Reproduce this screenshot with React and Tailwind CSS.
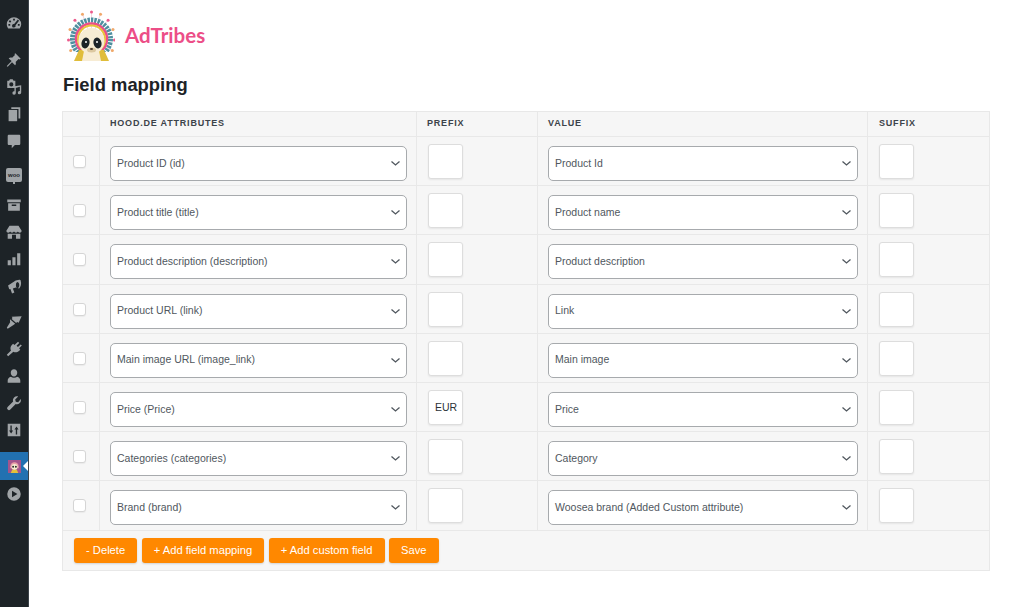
import React from 'react';

const rows = [
  { attribute: 'Product ID (id)', prefix: '', value: 'Product Id' },
  { attribute: 'Product title (title)', prefix: '', value: 'Product name' },
  { attribute: 'Product description (description)', prefix: '', value: 'Product description' },
  { attribute: 'Product URL (link)', prefix: '', value: 'Link' },
  { attribute: 'Main image URL (image_link)', prefix: '', value: 'Main image' },
  { attribute: 'Price (Price)', prefix: 'EUR', value: 'Price' },
  { attribute: 'Categories (categories)', prefix: '', value: 'Category' },
  { attribute: 'Brand (brand)', prefix: '', value: 'Woosea brand (Added Custom attribute)' },
];

const actions = ['- Delete', '+ Add field mapping', '+ Add custom field', 'Save'];

// Admin menu icons, 20x20 box
const icons = {
  dashboard: <path fillRule="evenodd" d="M10 3.500a8 8 0 0 0-8 8c0 1.800.6 3.400 1.600 4.700h12.800A8 8 0 0 0 18 11.500a8 8 0 0 0-8-8zM9 5.200h2v2H9zM5.500 6.800l1.500 1.400-1.400 1.400-1.400-1.400zM14.300 6l1.300 1.400-3.900 5a2 2 0 1 1-1.500-1.300zM3.800 11h2v2h-2zM14.300 11h2v2h-2z" />,
  pin: <path d="M11.500 2.500l6 6-1.500 1-1-.6-3.200 3.200c.6 1.400.3 2.800-.6 3.800L7.800 12.500 3 17.500l-1-.5.500-1 4.900-4.800-3.300-3c1-.9 2.400-1.200 3.800-.6l3.200-3.200-.6-1z" />,
  media: <><path fillRule="evenodd" d="M2.500 3h2l1-1.500h3L9.500 3h2v8h-9zM7 4.800a2.300 2.300 0 1 0 0 4.600 2.300 2.300 0 0 0 0-4.600z" /><path d="M18 8v8.200a1.900 1.900 0 1 1-1.500-1.800v-4.600l-4.500 1.200v5.600a1.900 1.900 0 1 1-1.500-1.800V9.200z" /></>,
  pages: <><path d="M7 2.500h10v12.500h-2V4.500H7z" /><path d="M4 5.500h9.500V18H4z" /></>,
  comment: <path d="M4.500 3h11c1 0 1.500.6 1.500 1.500V13c0 1-.6 1.500-1.500 1.500H11L7.500 18v-3.500h-3C3.500 14.500 3 14 3 13V4.500C3 3.600 3.600 3 4.500 3z" />,
  box: <path fillRule="evenodd" d="M2.500 4h15v3h-15zM3.500 8h13v8.500h-13zM7.500 9.500v1.500h5V9.500z" />,
  store: <path fillRule="evenodd" d="M5 3h10l3.500 5.500c0 1.300-1 2.200-2.200 2.200-.9 0-1.700-.5-2-1.200-.4.700-1.200 1.200-2.100 1.200S10.500 10.200 10 9.500c-.5.700-1.300 1.200-2.200 1.200s-1.700-.5-2.100-1.200c-.3.700-1.100 1.200-2 1.200-1.200 0-2.200-.9-2.200-2.200zM3 12h14v5.500H3zM7.800 13v4.500h4.400V13z" />,
  bars: <path d="M3 11.500h3.500V17H3zM8.200 8h3.500v9H8.200zM13.500 3.500H17V17h-3.500z" />,
  megaphone: <path fillRule="evenodd" d="M17.500 4.500c1 2.800 0 6.700-1.800 8.200L12 11.800l-3.300.9 1.700 4.600-2.600 1-1.800-4.900-1.300.3-1.300-4.200 8.500-5.500 3.900-1c.7-.3 1.500.5 2 1.500zM14.800 6a1.900 3.300 0 1 0 .1 5.900 1.900 3.300 0 0 0-.1-5.900z" />,
  brush: <path d="M18.500 3.500l-3.300 7.200-1.800-.8-1 1.100-5-4.300 1-1.100-1-1.300zM5.500 7l5.800 5-2.300 1.500L3 17.500l-1-1 3.700-6.200z" />,
  plug: <path d="M14.500 2l1.300 1.300-3 3 1.600 1.600 3-3 1.300 1.300-3 3 1.300 1.500-1.500 1.500c-1.700 1.700-4.200 2-6.200.9L3.500 18 2 16.500l4.700-4.800c-1.100-2-.8-4.500.9-6.200L9 4.100l1.500 1.400z" />,
  user: <path d="M10 2.500c2.200 0 3.600 1.700 3.600 3.800S12.200 10.500 10 10.500 6.400 8.400 6.400 6.300 7.800 2.500 10 2.500zM6.500 10.800c.9.800 2.100 1.200 3.500 1.200s2.600-.4 3.500-1.200c2.200.6 3.500 2.300 3.500 4.200v2.500H3V15c0-1.900 1.300-3.600 3.500-4.200z" />,
  wrench: <path d="M17.500 5.500c.5 1.600.1 3.400-1.100 4.600-1.200 1.200-3 1.600-4.500 1.100l-6 6a2 2 0 0 1-3-2.800l6.100-6c-.5-1.600-.1-3.300 1.100-4.500 1.200-1.200 2.900-1.600 4.500-1.100L11.300 6l.7 2.500 2.600.7z" />,
  settings: <path fillRule="evenodd" d="M3 3h14v14H3zM6 5v5.500H4.500L6.800 14l2.200-3.500H7.500V5zM12 9.500V15h1.500V9.500H15L12.800 6l-2.300 3.500z" />,
  play: <path fillRule="evenodd" d="M10 2.500a7.500 7.500 0 1 0 0 15 7.500 7.500 0 0 0 0-15zM7.800 6.300l6 3.700-6 3.700z" />,
};

function MenuIcon({ name }) {
  return (
    <div className="flex h-[27px] items-center justify-center">
      <svg viewBox="0 0 20 20" className="h-[18px] w-[18px] fill-[#a0a4a7]">{icons[name]}</svg>
    </div>
  );
}

function WooIcon() {
  return (
    <div className="flex h-[27px] items-center justify-center">
      <div className="relative flex h-[14px] w-[16px] items-center justify-center rounded-[2px] bg-[#a0a4a7]">
        <span className="text-[6px] leading-none font-bold text-[#1d2327]">woo</span>
        <span className="absolute -bottom-[2px] left-[7px] h-[2px] w-[2px] bg-[#a0a4a7]" />
      </div>
    </div>
  );
}

function ActiveIcon() {
  return (
    <div className="relative flex h-[28px] items-center justify-center bg-[#2271b1]">
      <svg viewBox="0 0 14 14" className="h-[13px] w-[13px]">
        <rect width="14" height="14" fill="#a3558d" />
        <path d="M2.500 7a4.500 4.500 0 0 1 9 0v2h-9z" fill="#e8a0a8" />
        <circle cx="7" cy="7.500" r="3.200" fill="#f6ecd2" />
        <circle cx="5.500" cy="7.300" r="1" fill="#222" />
        <circle cx="8.500" cy="7.300" r="1" fill="#222" />
        <path d="M3 14l1.500-3.500h5L11 14z" fill="#e3c13b" />
      </svg>
      <span className="absolute top-[9px] right-0 h-0 w-0 border-y-[5px] border-r-[5px] border-y-transparent border-r-white" />
    </div>
  );
}

function Sidebar() {
  return (
    <aside className="w-[29px] shrink-0 border-r border-[#3c434a] bg-[#1d2327] pt-[9px]">
      <MenuIcon name="dashboard" />
      <div className="mt-[10px]">
        <MenuIcon name="pin" />
        <MenuIcon name="media" />
        <MenuIcon name="pages" />
        <MenuIcon name="comment" />
      </div>
      <div className="mt-[7px]">
        <WooIcon />
      </div>
      <div className="mt-[3px]">
        <MenuIcon name="box" />
        <MenuIcon name="store" />
        <MenuIcon name="bars" />
        <MenuIcon name="megaphone" />
      </div>
      <div className="mt-[9px]">
        <MenuIcon name="brush" />
        <MenuIcon name="plug" />
        <MenuIcon name="user" />
        <MenuIcon name="wrench" />
        <MenuIcon name="settings" />
      </div>
      <div className="mt-[9px]">
        <ActiveIcon />
      </div>
      <MenuIcon name="play" />
    </aside>
  );
}

function PandaLogo() {
  const feathers = [];
  for (let i = 0; i <= 10; i++) {
    const a = Math.PI * (1.14 - (i / 10) * 1.28);
    const x = 24.500 + Math.cos(a) * 23;
    const y = 29 - Math.sin(a) * 27;
    feathers.push(
      <g key={i}>
        <path d={`M24.500 29L${x} ${y}`} stroke="#f3c9d6" strokeWidth="0.800" />
        <circle cx={x} cy={y} r="1.500" fill={i % 2 ? '#ec5a8c' : '#f0a86a'} />
      </g>
    );
  }
  return (
    <svg viewBox="0 0 48 52" className="h-[52px] w-[48px]">
      {feathers}
      <circle cx="24.500" cy="29" r="19" fill="none" stroke="#4f8f9f" strokeWidth="5" strokeDasharray="2.400 1" />
      <circle cx="24.500" cy="29" r="15.500" fill="none" stroke="#ec4e87" strokeWidth="2.500" />
      <circle cx="24.500" cy="29" r="13.500" fill="none" stroke="#e8c33c" strokeWidth="2" />
      <path d="M0 42h49v10H0z" fill="#fff" />
      <path d="M7 51l5-11h25l5 11z" fill="#e0bd3a" />
      <path d="M15 51l2-10h15l2 10z" fill="#f7ecd4" />
      <circle cx="24.500" cy="31" r="13" fill="#f7ecd4" />
      <ellipse cx="18.500" cy="33" rx="4" ry="5.500" fill="#1d2327" transform="rotate(15 18.500 33)" />
      <ellipse cx="30.500" cy="33" rx="4" ry="5.500" fill="#1d2327" transform="rotate(-15 30.500 33)" />
      <circle cx="19" cy="32" r="1" fill="#fff" />
      <circle cx="30" cy="32" r="1" fill="#fff" />
      <ellipse cx="24.500" cy="40" rx="4.500" ry="2.500" fill="#dcc8a0" />
      <ellipse cx="24.500" cy="39" rx="1.600" ry="1" fill="#4a3a2a" />
    </svg>
  );
}

function FieldSelect({ label, width }) {
  return (
    <div className={`flex h-[35px] items-center justify-between rounded-[5px] border border-[#a7aaad] bg-white pr-[6px] pl-[6px] ${width}`}>
      <span className="text-[10.500px] text-[#50575e]">{label}</span>
      <svg viewBox="0 0 9 5" className="h-[5px] w-[9px] fill-none stroke-[#50575e] stroke-[1.300]">
        <path d="M.5.5l4 3.500 4-3.500" />
      </svg>
    </div>
  );
}

function TextBox({ value }) {
  return (
    <div className="flex h-[35px] w-[35px] items-center overflow-hidden rounded-[3px] border border-[#dddddd] bg-white pl-[6px] text-[10.500px] whitespace-nowrap text-[#2c3338] shadow-[0_1px_2px_rgba(0,0,0,0.07)]">
      {value}
    </div>
  );
}

const headCell = 'border-r border-[#e8e8e8] pl-[10px] text-left text-[9px] font-bold tracking-[0.8px] text-[#3c434a]';

export default function App() {
  return (
    <div className="flex h-[607px] w-[1024px] overflow-hidden bg-white font-['Liberation_Sans',Arial,sans-serif]">
      <Sidebar />
      <main className="flex-1 pt-[10px] pl-[33px]">
        <div className="flex items-center gap-[10px] pl-[5px]">
          <PandaLogo />
          <span className="-mt-[2px] font-['Lato',sans-serif] text-[20.500px] leading-none font-bold text-[#ec4e87]">AdTribes</span>
        </div>
        <h1 className="mt-[11px] ml-[1px] text-[18.400px] leading-[24px] font-bold text-[#1d2327]">Field mapping</h1>

        <table className="mt-[14px] w-[927px] table-fixed border-collapse border border-[#e8e8e8] bg-[#f6f6f6]">
          <colgroup>
            <col className="w-[37px]" />
            <col className="w-[317px]" />
            <col className="w-[121px]" />
            <col className="w-[330px]" />
            <col className="w-[122px]" />
          </colgroup>
          <thead>
            <tr className="h-[25px] border-b border-[#e8e8e8]">
              <th className="border-r border-[#e8e8e8]" />
              <th className={headCell}>HOOD.DE ATTRIBUTES</th>
              <th className={headCell}>PREFIX</th>
              <th className={headCell}>VALUE</th>
              <th className={`${headCell} pl-[11px]`}>SUFFIX</th>
            </tr>
          </thead>
          <tbody>
            {rows.map((row) => (
              <tr key={row.attribute} className="h-[49.200px] border-b border-[#e8e8e8]">
                <td className="border-r border-[#e8e8e8] pt-[18px] pl-[10px] align-top">
                  <div className="h-[13px] w-[13px] rounded-[3px] border border-[#d5d5d5] bg-white shadow-[0_1px_1px_rgba(0,0,0,0.05)]" />
                </td>
                <td className="border-r border-[#e8e8e8] pt-[9px] pl-[10px] align-top">
                  <FieldSelect label={row.attribute} width="w-[297px]" />
                </td>
                <td className="border-r border-[#e8e8e8] pt-[7px] pl-[11px] align-top">
                  <TextBox value={row.prefix} />
                </td>
                <td className="border-r border-[#e8e8e8] pt-[9px] pl-[10px] align-top">
                  <FieldSelect label={row.value} width="w-[310px]" />
                </td>
                <td className="pt-[7px] pl-[11px] align-top">
                  <TextBox value="" />
                </td>
              </tr>
            ))}
            <tr>
              <td colSpan={5} className="h-[40px] pl-[11px]">
                <div className="flex gap-[4.500px]">
                  {actions.map((action) => (
                    <button key={action} className="h-[25px] rounded-[3px] bg-[#ff8800] px-[12px] text-[11.200px] text-white shadow-[0_1px_2px_rgba(0,0,0,0.15)]">
                      {action}
                    </button>
                  ))}
                </div>
              </td>
            </tr>
          </tbody>
        </table>
      </main>
    </div>
  );
}
